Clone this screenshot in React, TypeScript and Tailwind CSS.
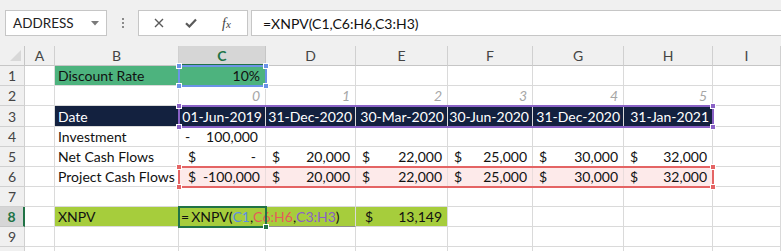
import type { ReactNode } from "react";

const FONT = "font-['Lato','Noto_Sans',sans-serif]";

const HEADERS = ["", "A", "B", "C", "D", "E", "F", "G", "H", "I"];

function Cell({ children, className = "" }: { children?: ReactNode; className?: string }) {
  return (
    <div className={`relative flex items-center whitespace-nowrap border-r border-b border-[#dadada] ${className}`}>
      {children}
    </div>
  );
}

function Acct({ v, pl = "pl-[6px]" }: { v: string; pl?: string }) {
  return (
    <div className={`flex w-full justify-between ${pl} pr-[5px]`}>
      <span>$</span>
      <span>{v}</span>
    </div>
  );
}

function RowHead({ n, active }: { n?: number; active?: boolean }) {
  return (
    <div
      className={
        active
          ? "flex items-center justify-center border-b border-r-2 border-b-[#c6c6c6] border-r-[#217346] bg-[#d6d6d6] font-bold text-[#217346]"
          : "flex items-center justify-center border-r border-b border-[#d0d0d0] bg-[#f0f0f0] text-[#444]"
      }
    >
      {n}
    </div>
  );
}

function Handle({ x, y, color }: { x: number; y: number; color: string }) {
  return (
    <div
      className="absolute h-[6px] w-[6px] border border-white"
      style={{ left: x - 3, top: y - 3, backgroundColor: color }}
    />
  );
}

function RangeBox({ x, y, w, h, color }: { x: number; y: number; w: number; h: number; color: string }) {
  return (
    <>
      <div className="absolute border-2" style={{ left: x, top: y, width: w, height: h, borderColor: color }} />
      <Handle x={x + 1} y={y + 1} color={color} />
      <Handle x={x + w - 1} y={y + 1} color={color} />
      <Handle x={x + 1} y={y + h - 1} color={color} />
      <Handle x={x + w - 1} y={y + h - 1} color={color} />
    </>
  );
}

const dates = ["01-Jun-2019", "31-Dec-2020", "30-Mar-2020", "30-Jun-2020", "31-Dec-2020", "31-Jan-2021"];
const flows = ["20,000", "22,000", "25,000", "30,000", "32,000"];

export default function App() {
  return (
    <div className={`h-[251px] w-[781px] overflow-hidden bg-white text-[14px] text-[#111] ${FONT}`}>
      {/* Name box + formula bar */}
      <div className="flex h-[46px] items-start bg-[#f0f0f0] pl-[5px] pt-[10px]">
        <div className="flex h-[26px] w-[102px] items-center justify-between border border-[#c6c6c6] bg-white pl-[7px] pr-[7px] text-[13.5px] text-[#222]">
          <span>ADDRESS</span>
          <svg width="8" height="5" viewBox="0 0 8 5" aria-hidden>
            <path d="M0 0h8L4 4.5z" fill="#7a7a7a" />
          </svg>
        </div>
        <div className="flex h-[26px] w-[31px] flex-col items-center justify-center gap-[2px]">
          <span className="h-[2px] w-[2px] bg-[#8a8a8a]" />
          <span className="h-[2px] w-[2px] bg-[#8a8a8a]" />
          <span className="h-[2px] w-[2px] bg-[#8a8a8a]" />
        </div>
        <div className="flex h-[26px] w-[110px] items-center border border-[#c6c6c6] bg-white">
          <svg className="ml-[15px]" width="10" height="10" viewBox="0 0 10 10" aria-hidden>
            <path d="M1 1l8 8M9 1l-8 8" stroke="#5a5a5a" strokeWidth="1.4" />
          </svg>
          <svg className="ml-[21px]" width="12" height="10" viewBox="0 0 12 10" aria-hidden>
            <path d="M1 5.2l3.4 3.3L11 1.5" stroke="#5a5a5a" strokeWidth="2.2" fill="none" />
          </svg>
          <span className="ml-[25px] font-['Liberation_Serif',serif] text-[14px] italic text-[#444]">
            f<span className="text-[11px]">x</span>
          </span>
        </div>
        <div className="ml-[3px] flex h-[26px] flex-1 items-center border border-r-0 border-[#c6c6c6] bg-white pl-[11px]">
          =XNPV(C1,C6:H6,C3:H3)
        </div>
      </div>

      {/* Sheet grid */}
      <div className="relative grid grid-cols-[25px_30px_124px_87px_90px_92px_85px_91px_89px_1fr] grid-rows-[20px_20px_20px_21px_20px_20px_20px_20px_20px_20px_20px]">
        {/* header row */}
        <div className="relative border-r border-b border-[#c6c6c6] bg-[#f0f0f0]">
          <svg className="absolute bottom-[4px] right-[3px]" width="11" height="11" viewBox="0 0 11 11" aria-hidden>
            <path d="M11 0v11H0z" fill="#d8d8d8" />
          </svg>
        </div>
        {HEADERS.slice(1).map((h) =>
          h === "C" ? (
            <div key={h} className="flex items-center justify-center border-r border-b-2 border-r-[#c6c6c6] border-b-[#217346] bg-[#d6d6d6] font-bold text-[#217346]">
              {h}
            </div>
          ) : (
            <div key={h} className="flex items-center justify-center border-r border-b border-[#d0d0d0] border-b-[#c6c6c6] bg-[#f0f0f0] text-[#444]">
              {h}
            </div>
          )
        )}

        {/* row 1 */}
        <RowHead n={1} />
        <Cell />
        <Cell className="border-[#4db37e] bg-[#4db37e] pl-[3px]">Discount Rate</Cell>
        <Cell className="justify-end border-[#4db37e] bg-[#4db37e] pr-[5px]">10%</Cell>
        <Cell />
        <Cell />
        <Cell />
        <Cell />
        <Cell />
        <Cell />

        {/* row 2 */}
        <RowHead n={2} />
        <Cell />
        <Cell />
        {["0", "1", "2", "3", "4", "5"].map((n) => (
          <Cell key={n} className="justify-end pr-[5px] italic text-[#a6a6a6]">
            {n}
          </Cell>
        ))}
        <Cell />

        {/* row 3 */}
        <RowHead n={3} />
        <Cell />
        <Cell className="border-[#13213f] bg-[#13213f] pl-[3px] text-white">Date</Cell>
        {dates.map((d, i) => (
          <Cell key={i} className="justify-end border-[#13213f] bg-[#13213f] pr-[3px] text-white">
            {d}
          </Cell>
        ))}
        <Cell />

        {/* row 4 */}
        <RowHead n={4} />
        <Cell />
        <Cell className="pl-[3px]">Investment</Cell>
        <Cell>
          <div className="flex w-full justify-between pl-[6px] pr-[7px]">
            <span>-</span>
            <span>100,000</span>
          </div>
        </Cell>
        <Cell />
        <Cell />
        <Cell />
        <Cell />
        <Cell />
        <Cell />

        {/* row 5 */}
        <RowHead n={5} />
        <Cell />
        <Cell className="pl-[3px]">Net Cash Flows</Cell>
        <Cell>
          <div className="flex w-full justify-between pl-[9px] pr-[9px]">
            <span>$</span>
            <span>-</span>
          </div>
        </Cell>
        {flows.map((f, i) => (
          <Cell key={i}>
            <Acct v={f} />
          </Cell>
        ))}
        <Cell />

        {/* row 6 */}
        <RowHead n={6} />
        <Cell />
        <Cell className="pl-[3px]">Project Cash Flows</Cell>
        <Cell className="border-[#eadcdc] bg-[#fdeaea]">
          <Acct v="-100,000" pl="pl-[9px]" />
        </Cell>
        {flows.map((f, i) => (
          <Cell key={i} className="border-[#eadcdc] bg-[#fdeaea]">
            <Acct v={f} />
          </Cell>
        ))}
        <Cell />

        {/* row 7 */}
        <RowHead n={7} />
        {Array.from({ length: 9 }).map((_, i) => (
          <Cell key={i} />
        ))}

        {/* row 8 */}
        <RowHead n={8} active />
        <Cell />
        <Cell className="border-[#a6cd3c] bg-[#a6cd3c] pl-[3px]">XNPV</Cell>
        <Cell className="z-10 overflow-visible border-[#a6cd3c] bg-[#a6cd3c] pl-[2px]">
          <span>=</span>
          <span className="mx-[1px] h-[16px] w-px bg-[#111]" />
          <span>XNPV(</span>
          <span className="text-[#5b8ee6]">C1</span>
          <span>,</span>
          <span className="text-[#e45b5b]">C6:H6</span>
          <span>,</span>
          <span className="text-[#8a5fc8]">C3:H3</span>
          <span>)</span>
        </Cell>
        <Cell className="border-[#a6cd3c] border-b-[#8f8f8f] bg-[#a6cd3c]" />
        <Cell className="border-[#a6cd3c] bg-[#a6cd3c]">
          <Acct v="13,149" pl="pl-[9px]" />
        </Cell>
        <Cell />
        <Cell />
        <Cell />
        <Cell />

        {/* row 9 and the top of row 10 */}
        <RowHead n={9} />
        {Array.from({ length: 9 }).map((_, i) => (
          <Cell key={i} />
        ))}
        <RowHead />
        {Array.from({ length: 9 }).map((_, i) => (
          <Cell key={i} />
        ))}

        {/* reference highlights */}
        <RangeBox x={178} y={19} w={89} h={22} color="#6b93e6" />
        <RangeBox x={178} y={59} w={536} h={23} color="#8a62c6" />
        <RangeBox x={178} y={120} w={536} h={22} color="#e46464" />
        <div className="absolute z-20 border-2 border-[#217346]" style={{ left: 178, top: 160, width: 89, height: 22 }} />
        <div className="absolute z-20 h-[6px] w-[6px] border border-white bg-[#217346]" style={{ left: 263, top: 178 }} />
      </div>
    </div>
  );
}
